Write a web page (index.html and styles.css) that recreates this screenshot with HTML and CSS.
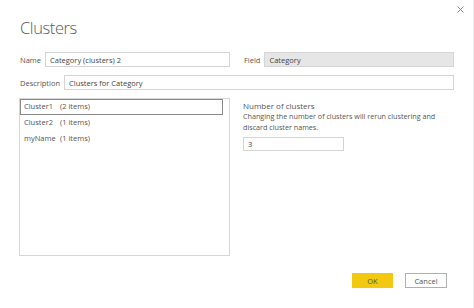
FILE: index.html
```html
<!DOCTYPE html>
<html lang="en">
<head>
    <meta charset="UTF-8">
    <meta name="viewport" content="width=device-width, initial-scale=1.0">
    <title>Clusters</title>
    <link rel="stylesheet" href="styles.css">
</head>
<body>
    <div id="dialog">
        <button class="close" aria-label="Close">
            <svg width="7" height="7" viewBox="0 0 7 7">
                <path d="M0.5 0.5 L6.5 6.5 M6.5 0.5 L0.5 6.5" stroke="#888" stroke-width="1" fill="none"/>
            </svg>
        </button>

        <h1 class="title">Clusters</h1>

        <div class="grid">
            <div class="field">
                <label class="label">Name</label>
                <input class="input" type="text" value="Category (clusters) 2">
            </div>
            <div class="field">
                <label class="label">Field</label>
                <input class="input readonly" type="text" value="Category" readonly>
            </div>
            <div class="field wide">
                <label class="label">Description</label>
                <input class="input" type="text" value="Clusters for Category">
            </div>

            <ul class="list">
                <li class="item selected"><span class="name">Cluster1</span><span class="count">(2 items)</span></li>
                <li class="item"><span class="name">Cluster2</span><span class="count">(1 items)</span></li>
                <li class="item"><span class="name">myName</span><span class="count">(1 items)</span></li>
            </ul>

            <div class="panel">
                <div class="panel-title">Number of clusters</div>
                <p class="hint">Changing the number of clusters will rerun clustering and discard cluster names.</p>
                <input class="input number" type="text" value="3">
            </div>
        </div>

        <div class="footer">
            <button class="btn ok">OK</button>
            <button class="btn cancel">Cancel</button>
        </div>
    </div>
</body>
</html>
```

FILE: styles.css
```css
* {
    margin: 0;
    padding: 0;
    box-sizing: border-box;
}

body {
    background-color: white;
    font-family: "Open Sans", "Noto Sans", sans-serif;
    font-size: 7.5px;
    color: #555;
}

#dialog {
    position: relative;
    width: 474px;
    height: 308px;
    padding: 18px 20px 0 19px;
    border-right: 1px solid #eee;
}

.close {
    position: absolute;
    top: 6px;
    right: 9px;
    border: none;
    background: none;
    width: 7px;
    height: 7px;
    line-height: 0;
}

.title {
    font-size: 16.5px;
    font-weight: 300;
    letter-spacing: -0.4px;
    line-height: 20px;
    color: #5a5a5a;
    margin-left: 1px;
    margin-bottom: 14px;
}

.grid {
    display: grid;
    grid-template-columns: 211px 211px;
    column-gap: 13px;
    row-gap: 8px;
}

.field {
    display: flex;
    align-items: center;
    gap: 4px;
}
.field.wide {
    grid-column: 1 / 3;
}

.label {
    padding-left: 1px;
    white-space: nowrap;
}

.input {
    flex: 1;
    height: 15px;
    border: 1px solid #d4d4d4;
    padding: 0 4px;
    font-family: inherit;
    font-size: 7.5px;
    color: #444;
    background-color: white;
    outline: none;
}
.input.readonly {
    background-color: #e6e6e6;
    border-color: #d6d6d6;
}

.list {
    list-style: none;
    height: 158px;
    border: 1px solid #d6d6d6;
    padding-right: 6px;
}
.item {
    height: 15.5px;
    line-height: 13.5px;
    padding-left: 3px;
    border: 1px solid transparent;
}
.item.selected {
    border-color: #8a8a8a;
    height: 16px;
}
.name {
    display: inline-block;
    min-width: 33px;
    margin-right: 3px;
}

.panel {
    padding-top: 2px;
}
.panel-title {
    font-size: 8px;
    line-height: 11px;
}
.hint {
    font-size: 7.2px;
    line-height: 11px;
    margin-bottom: 4px;
}
.input.number {
    display: block;
    width: 101px;
    height: 14px;
    flex: none;
}

.footer {
    display: flex;
    justify-content: flex-end;
    gap: 12px;
    margin-top: 17px;
    padding-right: 6px;
}
.btn {
    width: 42px;
    height: 15px;
    font-family: inherit;
    font-size: 7.5px;
    color: #555;
    border: 1px solid #b0b0b0;
    background-color: white;
}
.btn.ok {
    background-color: #f2c811;
    border-color: #f2c811;
    width: 41px;
}
```
